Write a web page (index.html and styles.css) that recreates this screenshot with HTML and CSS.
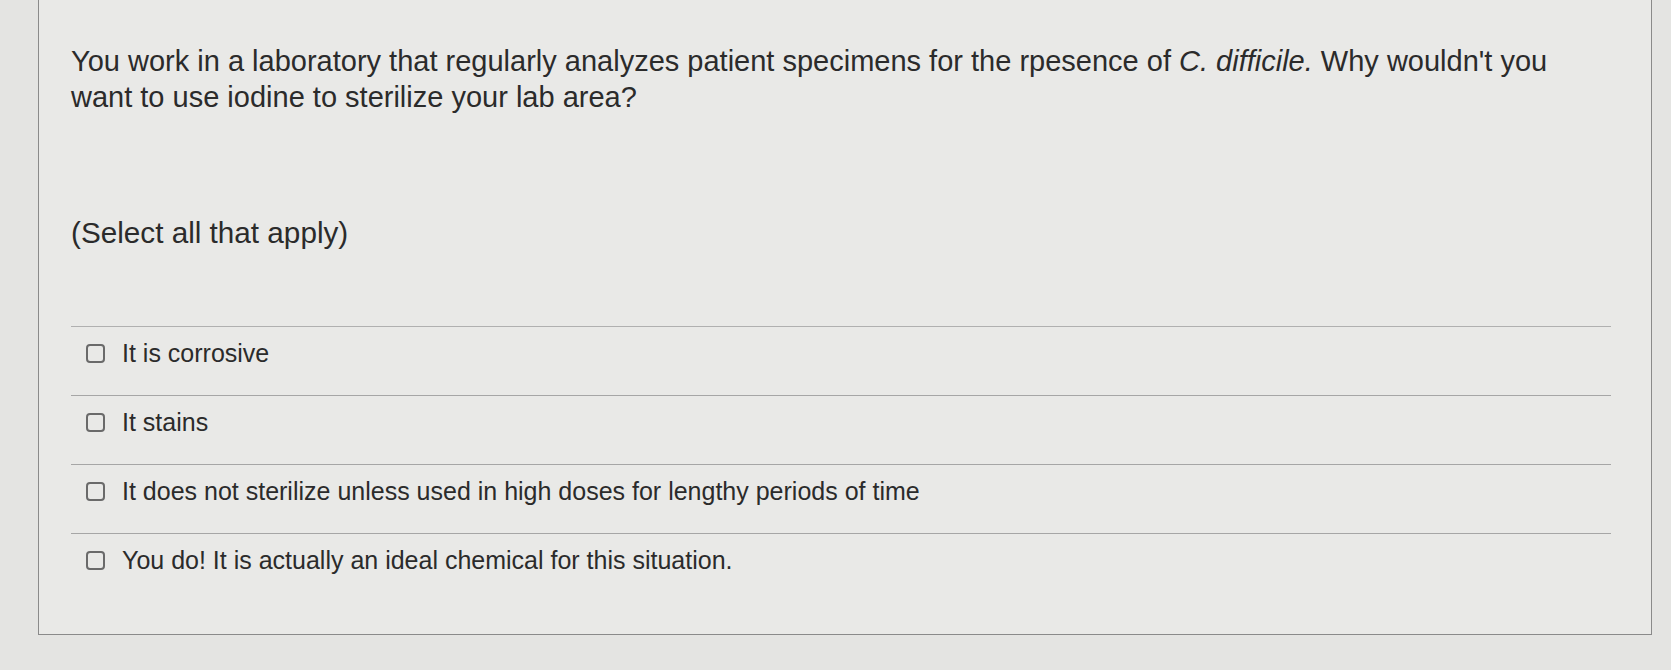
FILE: index.html
```html
<!DOCTYPE html>
<html>
<head>
<meta charset="utf-8">
<link rel="stylesheet" href="styles.css">
</head>
<body>
<div class="card">
  <p class="question">You work in a laboratory that regularly analyzes patient specimens for the rpesence of <i>C. difficile.</i> Why wouldn't you want to use iodine to sterilize your lab area?</p>
  <p class="hint">(Select all that apply)</p>
  <ul class="options">
    <li class="option"><span class="box"></span><span class="label">It is corrosive</span></li>
    <li class="option"><span class="box"></span><span class="label">It stains</span></li>
    <li class="option"><span class="box"></span><span class="label">It does not sterilize unless used in high doses for lengthy periods of time</span></li>
    <li class="option"><span class="box"></span><span class="label">You do! It is actually an ideal chemical for this situation.</span></li>
  </ul>
</div>
</body>
</html>
```

FILE: styles.css
```css
html, body {
  margin: 0;
  padding: 0;
}
body {
  width: 1671px;
  height: 670px;
  background: #e4e4e2;
  font-family: "Liberation Sans", Arial, sans-serif;
  color: #2b2b2b;
  overflow: hidden;
}
.card {
  margin-left: 38px;
  width: 1614px;
  height: 635px;
  border: 1px solid #8a8a8a;
  border-top: none;
  background: #e9e9e7;
  box-sizing: border-box;
  padding: 43px 0 0 32px;
}
.question {
  margin: 0;
  width: 1500px;
  font-size: 29px;
  line-height: 36px;
}
.hint {
  margin: 100px 0 0 0;
  font-size: 29.7px;
  line-height: 36px;
}
.options {
  list-style: none;
  margin: 75px 0 0 0;
  padding: 0;
  width: 1540px;
}
.option {
  display: flex;
  align-items: center;
  height: 69px;
  box-sizing: border-box;
  border-top: 1px solid #a6a6a6;
  padding: 11px 0 27px 15px;
  font-size: 25px;
}
.option:first-child { border-top-color: #b0b0b0; }
.box {
  width: 15px;
  height: 15px;
  border: 2px solid #6a6a6a;
  border-radius: 4px;
  margin-right: 17px;
  flex: none;
}
.label {
  line-height: 30px;
}
```
